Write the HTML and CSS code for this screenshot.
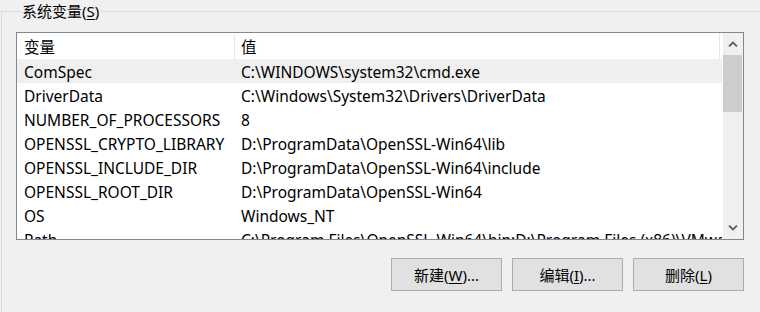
FILE: index.html
```html
<!DOCTYPE html>
<html lang="zh-CN">
<head>
<meta charset="utf-8">
<title>系统变量</title>
<link rel="stylesheet" href="styles.css">
</head>
<body>
<fieldset class="group">
  <legend class="group-title">系统变量(<u>S</u>)</legend>
  <div class="listbox">
    <div class="list">
      <div class="list-head">
        <div class="col-name">变量</div>
        <div class="col-value head-value">值</div>
      </div>
      <div class="list-body">
        <div class="row selected"><div class="col-name">ComSpec</div><div class="col-value">C:\WINDOWS\system32\cmd.exe</div></div>
        <div class="row"><div class="col-name">DriverData</div><div class="col-value">C:\Windows\System32\Drivers\DriverData</div></div>
        <div class="row"><div class="col-name">NUMBER_OF_PROCESSORS</div><div class="col-value">8</div></div>
        <div class="row"><div class="col-name">OPENSSL_CRYPTO_LIBRARY</div><div class="col-value">D:\ProgramData\OpenSSL-Win64\lib</div></div>
        <div class="row"><div class="col-name">OPENSSL_INCLUDE_DIR</div><div class="col-value">D:\ProgramData\OpenSSL-Win64\include</div></div>
        <div class="row"><div class="col-name">OPENSSL_ROOT_DIR</div><div class="col-value">D:\ProgramData\OpenSSL-Win64</div></div>
        <div class="row"><div class="col-name">OS</div><div class="col-value">Windows_NT</div></div>
        <div class="row"><div class="col-name">Path</div><div class="col-value">C:\Program Files\OpenSSL-Win64\bin;D:\Program Files (x86)\VMware\bin</div></div>
      </div>
    </div>
    <div class="scrollbar">
      <div class="sb-btn">
        <svg width="10" height="6" viewBox="0 0 10 6"><path d="M1 5.5 L5 1.5 L9 5.5" fill="none" stroke="#606060" stroke-width="1.8"/></svg>
      </div>
      <div class="sb-track">
        <div class="sb-thumb"></div>
      </div>
      <div class="sb-btn">
        <svg width="10" height="6" viewBox="0 0 10 6"><path d="M1 0.5 L5 4.5 L9 0.5" fill="none" stroke="#606060" stroke-width="1.8"/></svg>
      </div>
    </div>
  </div>
  <div class="buttons">
    <button class="btn">新建(<u>W</u>)...</button>
    <button class="btn">编辑(<u>I</u>)...</button>
    <button class="btn">删除(<u>L</u>)</button>
  </div>
</fieldset>
</body>
</html>
```
FILE: styles.css
```css
html, body {
  margin: 0;
  padding: 0;
  background: #f0f0f0;
}
body {
  width: 760px;
  height: 312px;
  overflow: hidden;
  font-family: "Noto Sans", "Noto Sans CJK SC", sans-serif;
  font-size: 15.5px;
  color: #000;
}
.group {
  margin: 3px 0 0 1px;
  padding: 0 16px 21px 14px;
  border: 1px solid #dcdcdc;
  border-right: 0;
  min-width: 0;
}
.group-title {
  margin-left: 5px;
  padding: 0 1px;
  font-size: 15px;
  line-height: 16px;
  color: #000;
}
.group-title u, .btn u {
  text-decoration-thickness: 1px;
  text-underline-offset: 2px;
}
.listbox {
  margin-top: 13px;
  height: 206px;
  border: 1px solid #828790;
  background: #fff;
  display: flex;
  overflow: hidden;
}
.list {
  flex: 1;
  min-width: 0;
  display: flex;
  flex-direction: column;
}
.list-head {
  height: 27px;
  display: flex;
  align-items: center;
  margin-right: 3px;
  border-right: 1px solid #e5e5e5;
  box-sizing: border-box;
  padding-top: 1px;
}
.list-head .col-value {
  height: 25px;
  border-left: 1px solid #e5e5e5;
  display: flex;
  align-items: center;
  padding-left: 6px;
}
.list-body {
  display: flex;
  flex-direction: column;
}
.row {
  height: 24px;
  box-sizing: border-box;
  padding-top: 2px;
  display: flex;
  align-items: center;
  white-space: nowrap;
  margin-right: 1px;
}
.row.selected {
  background: #efefef;
}
.col-name {
  width: 217px;
  flex: none;
  padding-left: 7px;
  box-sizing: border-box;
  white-space: nowrap;
}
.col-value {
  flex: 1;
  min-width: 0;
  padding-left: 7px;
  white-space: nowrap;
  overflow: hidden;
}
.scrollbar {
  width: 20px;
  flex: none;
  background: #f0f0f0;
  display: flex;
  flex-direction: column;
}
.sb-btn {
  height: 22px;
  display: flex;
  align-items: center;
  justify-content: center;
  padding-right: 1px;
}
.sb-track {
  flex: 1;
}
.sb-thumb {
  height: 57px;
  width: 19px;
  background: #cdcdcd;
}
.buttons {
  margin-top: 18px;
  display: flex;
  justify-content: flex-end;
  gap: 10px;
}
.btn {
  width: 111px;
  height: 33px;
  background: #e1e1e1;
  border: 1px solid #adadad;
  font-family: "Noto Sans", "Noto Sans CJK SC", sans-serif;
  font-size: 15px;
  color: #000;
  padding: 2px 0 0;
  line-height: 1;
}
```
